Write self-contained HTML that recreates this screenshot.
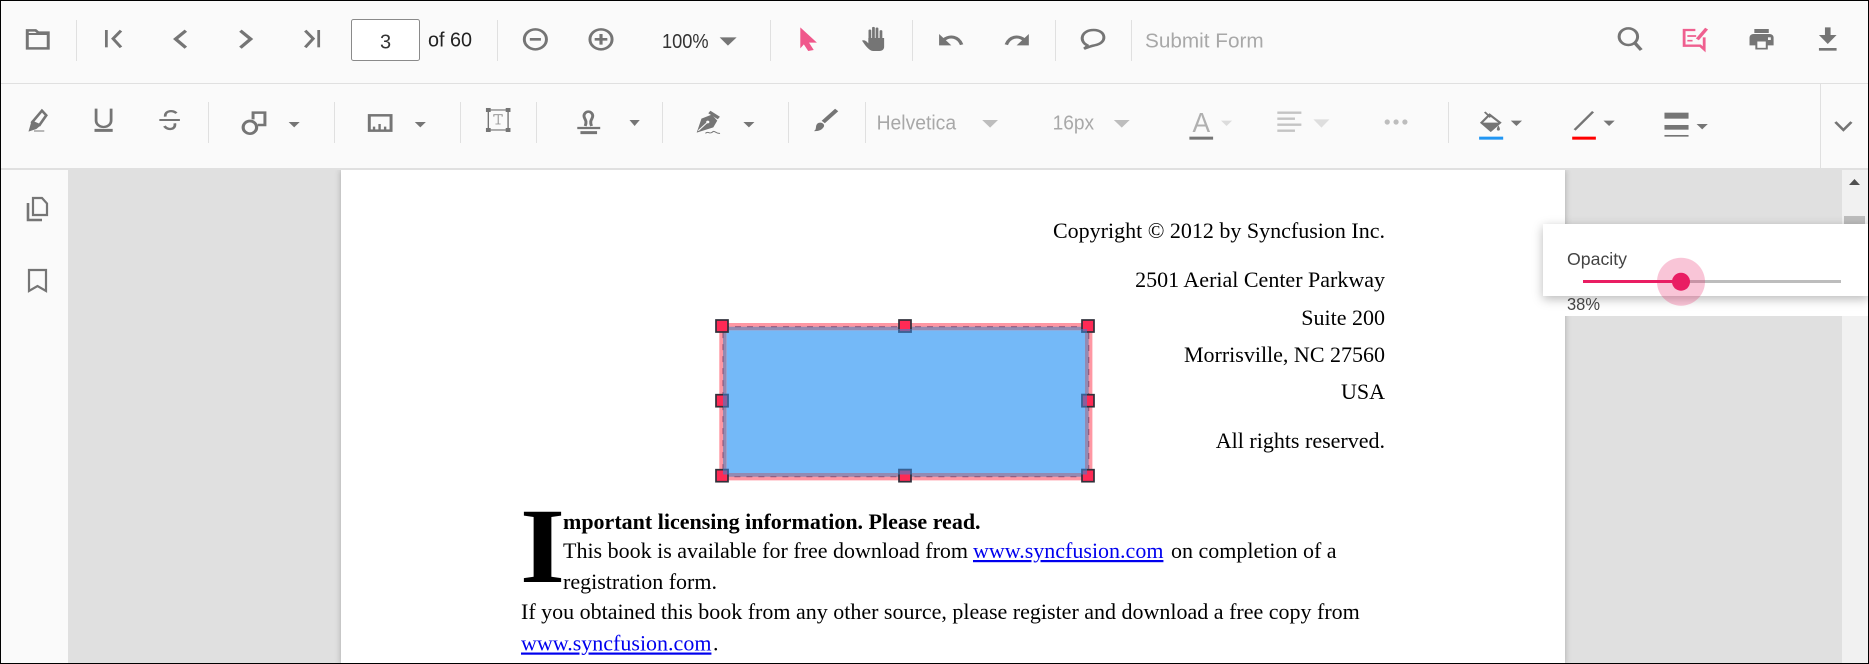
<!DOCTYPE html>
<html><head><meta charset="utf-8"><style>
html,body{margin:0;padding:0;width:1869px;height:664px;overflow:hidden;background:#e0e0e0}
div{position:absolute}
svg{position:absolute;left:0;top:0}
text{white-space:pre}
.r{font-family:"Liberation Sans",sans-serif}
.s{font-family:"Liberation Serif",serif;font-size:22px;fill:#000}
</style></head><body>
<div style="left:341px;top:170px;width:1224px;height:494px;background:#fff;box-shadow:0 0 6px rgba(0,0,0,.25)"></div>
<div style="left:0;top:0;width:1869px;height:83px;background:#fafafa;border-bottom:1px solid #e0e0e0"></div>
<div style="left:0;top:84px;width:1869px;height:84px;background:#fafafa;border-bottom:2px solid #e0e0e0"></div>
<div style="left:0;top:170px;width:68px;height:494px;background:#fafafa"></div>
<div style="left:1842px;top:170px;width:27px;height:494px;background:#f1f1f1"></div>
<div style="left:1844px;top:216px;width:21px;height:10px;background:#bdbdbd"></div>
<div style="left:1560px;top:296px;width:309px;height:20px;background:#fff"></div>
<div style="left:1543px;top:224px;width:326px;height:72px;background:#fff;box-shadow:0 3px 10px rgba(0,0,0,.28)"></div>
<svg width="1869" height="664" viewBox="0 0 1869 664" xmlns="http://www.w3.org/2000/svg">
<defs><clipPath id="hc">
<rect x="898" y="319" width="14" height="14"/><rect x="1081" y="319" width="14" height="14"/>
<rect x="715" y="393.5" width="14" height="14"/><rect x="1081" y="393.5" width="14" height="14"/>
<rect x="715" y="468.5" width="14" height="14"/><rect x="898" y="468.5" width="14" height="14"/><rect x="1081" y="468.5" width="14" height="14"/>
</clipPath></defs>

<!-- separators -->
<g fill="#e0e0e0">
<rect x="76" y="20" width="1" height="41"/><rect x="497" y="20" width="1" height="41"/><rect x="770" y="20" width="1" height="41"/><rect x="912" y="20" width="1" height="41"/><rect x="1055" y="20" width="1" height="41"/><rect x="1131" y="20" width="1" height="41"/>
<rect x="208" y="102" width="1" height="41"/><rect x="334" y="102" width="1" height="41"/><rect x="460" y="102" width="1" height="41"/><rect x="536" y="102" width="1" height="41"/><rect x="662" y="102" width="1" height="41"/><rect x="788" y="102" width="1" height="41"/><rect x="865" y="102" width="1" height="41"/><rect x="1448" y="102" width="1" height="41"/>
<rect x="1820" y="84" width="1" height="84"/>
</g>

<!-- input -->
<rect x="351.5" y="19.5" width="68" height="41" rx="2" fill="#fff" stroke="#8a8a8a" stroke-width="1"/>

<!-- group A -->
<g transform="scale(.3954,.3333)" fill="none" stroke="#757575" stroke-width="7.5">
<path d="M69 91H90L97 98H122V145H69Z"/>
<path d="M66 102H124" stroke-width="6"/>
<path d="M269 90V142" stroke-width="7"/><path d="M306 92L286 116L306 142" stroke-width="8"/>
<path d="M470 92L444 117L470 143" stroke-width="9"/>
<path d="M608 92L634 117L608 143" stroke-width="9"/>
<path d="M772 92L792 116L772 142" stroke-width="8"/><path d="M806 90V142" stroke-width="7"/>
<ellipse cx="1354" cy="118" rx="28" ry="30"/><path d="M1340 118H1368" stroke-width="8"/>
<ellipse cx="1520" cy="118" rx="28" ry="30"/><path d="M1504 118H1536M1520 102V134" stroke-width="8"/>
<!-- highlighter -->
<path d="M106 332L117 346L100 375L82 366Z" stroke-width="7"/>
<path d="M80 362L104 375L92 387L72 395Z" fill="#757575" stroke="none"/>
<path d="M86 393H112" stroke-width="3"/>
<!-- underline -->
<path d="M243 326V362a19 19 0 0 0 38 0V326" stroke-width="7"/><path d="M239 391H285" stroke-width="9"/>
<!-- strike -->
<path d="M403 360H455" stroke-width="6"/>
<path d="M446 340C440 330 416 330 418 350M416 378C422 392 446 390 442 370" stroke-width="7"/>
<!-- shapes -->
<ellipse cx="632" cy="382" rx="17" ry="19" stroke-width="8"/><path d="M640 358V338H670V375H652" stroke-width="7.5"/>
<path d="M730 366H758L744 382Z" fill="#757575" stroke="none"/>
<!-- measure -->
<rect x="934" y="346" width="55" height="46"/><path d="M946 390V380M960 390V372M974 390V380" stroke-width="6"/>
<path d="M1049 366H1077L1063 382Z" fill="#757575" stroke="none"/>
<!-- free text -->
<rect x="1235" y="330" width="50" height="60" stroke-width="3.5"/>
<g fill="#757575" stroke="none"><rect x="1229" y="324" width="12" height="12"/><rect x="1279" y="324" width="12" height="12"/><rect x="1229" y="384" width="12" height="12"/><rect x="1279" y="384" width="12" height="12"/></g>
<path d="M1249 350V344H1270V350M1260 344V372M1253 372H1266" stroke-width="2.5" stroke="#8a8a8a"/>
<!-- stamp -->
<path d="M1480 378C1486 360 1477 358 1477 348a11 13 0 0 1 22 0c0 10-9 12-3 30" stroke-width="7.5"/>
<path d="M1460 384H1518" stroke-width="7"/><path d="M1468 398H1510" stroke-width="9"/>
</g>

<!-- group B -->
<g transform="translate(620,0) scale(.3954,.3333)" fill="none" stroke="#757575" stroke-width="7.5">
<path d="M252 112H295L273 137Z" fill="#757575" stroke="none"/>
<path d="M456 82L498 128L478 128L490 150L476 153L465 133L456 145Z" fill="#f0578b" stroke="none"/>
<!-- hand -->
<path d="M632 118V92M641 118V84M650 118V86M660 120V94" stroke-width="7" stroke-linecap="round"/>
<path d="M612 122C618 118 624 124 628 130V114H668V140C668 148 664 153 656 153H640C630 153 620 136 612 122Z" fill="#757575" stroke="none"/>
<!-- undo/redo -->
<path d="M807 102L838 136H807Z" fill="#757575" stroke="none"/>
<path d="M818 120C835 104 856 110 864 134" stroke-width="9"/>
<path d="M1034 102L1003 136H1034Z" fill="#757575" stroke="none"/>
<path d="M1023 120C1006 104 985 110 977 134" stroke-width="9"/>
<!-- comment -->
<path d="M1182 136C1160 124 1166 90 1198 90C1230 90 1234 130 1200 136C1192 137 1184 142 1174 146C1178 142 1182 140 1182 136Z" stroke-width="7.5"/>
<!-- stamp caret -->
<path d="M24 360H50L37 378Z" fill="#757575" stroke="none"/>
<!-- pen -->
<path d="M194 398L206 356L232 344L246 362L236 382Z" fill="#757575" stroke="none"/>
<path d="M198 392L220 368" stroke="#fafafa" stroke-width="3"/>
<circle cx="222" cy="366" r="4" fill="#fafafa" stroke="none"/>
<path d="M226 336L250 354" stroke-width="9"/>
<path d="M216 400C224 392 226 404 234 396C240 390 242 402 253 400" stroke-width="3"/>
<path d="M312 366H340L326 382Z" fill="#757575" stroke="none"/>
<!-- brush -->
<path d="M514 366L548 330" stroke-width="11"/>
<path d="M494 392C504 392 510 388 514 380C518 370 502 364 498 376C496 384 498 388 494 392Z" fill="#757575" stroke="#757575" stroke-width="3"/>
<!-- disabled -->
<path d="M916 360H956L936 383Z" fill="#bdbdbd" stroke="none"/>
<path d="M1249 360H1289L1269 383Z" fill="#bdbdbd" stroke="none"/>
<rect x="1440" y="410" width="60" height="9" fill="#757575" stroke="none"/>
<path d="M1520 362H1548L1534 378Z" fill="#dcdcdc" stroke="none"/>
</g>

<!-- group C -->
<g transform="translate(1240,0) scale(.4012,.3333)" fill="none" stroke="#757575" stroke-width="7">
<ellipse cx="968" cy="110" rx="23" ry="25" stroke-width="7.5"/><path d="M985 130L1000 150" stroke-width="9"/>
<!-- annotation -->
<g stroke="#ef5f8f">
<path d="M1135 90H1107V137H1147L1157 148V112" stroke-width="7"/>
<path d="M1115 108H1137M1115 122H1128" stroke-width="5"/>
<path d="M1140 118L1163 86" stroke-width="9"/>
</g>
<!-- print -->
<rect x="1282" y="87" width="36" height="12" fill="#757575" stroke="none"/>
<path d="M1270 112a10 10 0 0 1 10-10H1320a10 10 0 0 1 10 10V136H1270Z" fill="#757575" stroke="none"/>
<rect x="1287" y="122" width="26" height="24" fill="#fafafa" stroke="#757575" stroke-width="5"/>
<rect x="1316" y="112" width="7" height="8" fill="#fafafa" stroke="none"/>
<!-- download -->
<path d="M1458 82H1472V105H1487L1465 132L1443 105H1458Z" fill="#757575" stroke="none"/>
<rect x="1443" y="144" width="44" height="8" fill="#757575" stroke="none"/>
<!-- align -->
<path d="M93 338H153M93 356H137M93 374H153M93 392H137" stroke="#c4c4c4" stroke-width="7"/>
<path d="M183 358H223L203 383Z" fill="#dedede" stroke="none"/>
<g fill="#bdbdbd" stroke="none"><ellipse cx="367" cy="366" rx="6.5" ry="8"/><ellipse cx="389" cy="366" rx="6.5" ry="8"/><ellipse cx="411" cy="366" rx="6.5" ry="8"/></g>
<!-- fill -->
<path d="M622 344L648 368L625 392L602 368Z" stroke-width="6"/>
<path d="M604 368H646L625 392Z" fill="#757575" stroke="none"/>
<path d="M610 336L624 352" stroke-width="5"/>
<path d="M644 376C640 384 638 392 644 392C650 392 648 384 644 376Z" fill="#757575" stroke="none"/>
<rect x="596" y="410" width="60" height="9" fill="#2196f3" stroke="none"/>
<path d="M675 362H703L689 378Z" fill="#757575" stroke="none"/>
<!-- line -->
<path d="M834 390L880 335" stroke-width="6.5"/>
<rect x="828" y="410" width="59" height="9" fill="#f00" stroke="none"/>
<path d="M906 362H934L920 378Z" fill="#757575" stroke="none"/>
<!-- thickness -->
<g fill="#757575" stroke="none"><rect x="1058" y="338" width="60" height="18"/><rect x="1058" y="375" width="60" height="14"/><rect x="1058" y="405" width="60" height="5"/></g>
<path d="M1138 372H1166L1152 388Z" fill="#757575" stroke="none"/>
<!-- chevron -->
<path d="M1484 366L1504 390L1524 366" stroke-width="7"/>
</g>

<!-- toolbar text -->
<g class="r" font-size="20">
<text x="385.5" y="48.5" text-anchor="middle" fill="#333">3</text>
<text x="428" y="46.7" fill="#222" textLength="44" lengthAdjust="spacingAndGlyphs">of 60</text>
<text x="662" y="47.8" fill="#333" textLength="46.6" lengthAdjust="spacingAndGlyphs">100%</text>
<text x="1145" y="47.6" fill="#a8a8a8" font-size="20.5" textLength="118.7" lengthAdjust="spacingAndGlyphs">Submit Form</text>
<text x="876.6" y="129.3" fill="#a8a8a8" textLength="79.5" lengthAdjust="spacingAndGlyphs">Helvetica</text>
<text x="1052.6" y="129.3" fill="#a8a8a8" textLength="41.5" lengthAdjust="spacingAndGlyphs">16px</text>
<text x="1192.5" y="132" fill="#b0b0b0" font-size="28" textLength="17.6" lengthAdjust="spacingAndGlyphs">A</text>
</g>

<!-- sidebar icons -->
<g fill="none" stroke="#757575" stroke-width="2.2">
<path d="M33 198H42L47 203.5V215H33Z"/><path d="M28 203V220H42" stroke-width="2.6"/>
<path d="M29 270H46V291L37.5 286L29 291Z" stroke-width="2.2"/>
</g>
<path d="M1849 185L1854.5 179L1860 185Z" fill="#505050"/>

<!-- page text -->
<g class="s">
<text x="1385" y="238" text-anchor="end">Copyright © 2012 by Syncfusion Inc.</text>
<text x="1385" y="287" text-anchor="end">2501 Aerial Center Parkway</text>
<text x="1385" y="325" text-anchor="end">Suite 200</text>
<text x="1385" y="362" text-anchor="end">Morrisville, NC 27560</text>
<text x="1385" y="399" text-anchor="end">USA</text>
<text x="1385" y="448" text-anchor="end">All rights reserved.</text>
<text x="563" y="529" font-weight="700">mportant licensing information. Please read.</text>
<text x="563" y="558">This book is available for free download from </text>
<text x="973" y="558" fill="#0000ee" text-decoration="underline">www.syncfusion.com</text>
<text x="1171" y="558">on completion of a</text>
<text x="563" y="589">registration form.</text>
<text x="521" y="619">If you obtained this book from any other source, please register and download a free copy from</text>
<text x="521" y="650.5" fill="#0000ee" text-decoration="underline">www.syncfusion.com</text>
<text x="713" y="650.5">.</text>
<text x="520" y="582" font-size="107" font-weight="700" textLength="45" lengthAdjust="spacingAndGlyphs">I</text>
</g>

<!-- annotation rect -->
<path fill-rule="evenodd" d="M719.3 323H1092.4V480.4H719.3ZM726.7 330.4V473H1085V330.4Z" fill="#ff3048" fill-opacity=".5"/>
<path fill-rule="evenodd" d="M723 326.7H1088.7V476.7H723ZM726.7 330.4V473H1085V330.4Z" fill="#3d7fc0" fill-opacity=".55"/>
<rect x="726.7" y="330.4" width="358.3" height="142.6" fill="#74b9f8"/>
<rect x="723" y="326.7" width="365.7" height="150" fill="none" stroke="#7c4a70" stroke-opacity=".75" stroke-width="1.2" stroke-dasharray="6 6"/>
<g fill="#ff2a55" stroke="#30303a" stroke-width="1.7">
<rect x="716" y="320" width="12" height="12"/>
<rect x="899" y="320" width="12" height="12"/>
<rect x="1082" y="320" width="12" height="12"/>
<rect x="716" y="394.7" width="12" height="12"/>
<rect x="1082" y="394.7" width="12" height="12"/>
<rect x="716" y="469.7" width="12" height="12"/>
<rect x="899" y="469.7" width="12" height="12"/>
<rect x="1082" y="469.7" width="12" height="12"/>
</g>
<g clip-path="url(#hc)"><rect x="723" y="329" width="364" height="145.5" fill="#3d80cc" fill-opacity=".6"/></g>

<!-- panel text + slider -->
<g class="r" font-size="17.5" fill="#444">
<text x="1567" y="265" textLength="60" lengthAdjust="spacingAndGlyphs">Opacity</text>
<text x="1567" y="310" textLength="33" lengthAdjust="spacingAndGlyphs">38%</text>
</g>
<rect x="1583" y="280" width="258" height="3" fill="#bdbdbd"/>
<rect x="1583" y="280" width="98" height="3" fill="#e91e63"/>
<circle cx="1681" cy="281.7" r="24" fill="#e91e63" fill-opacity=".26"/>
<circle cx="1681" cy="281.7" r="9" fill="#e91e63"/>

<!-- frame -->
<g fill="#000"><rect x="0" y="0" width="1869" height="1"/><rect x="0" y="0" width="1" height="664"/><rect x="1868" y="0" width="1" height="664"/><rect x="0" y="663" width="1869" height="1"/></g>
</svg>
</body></html>
